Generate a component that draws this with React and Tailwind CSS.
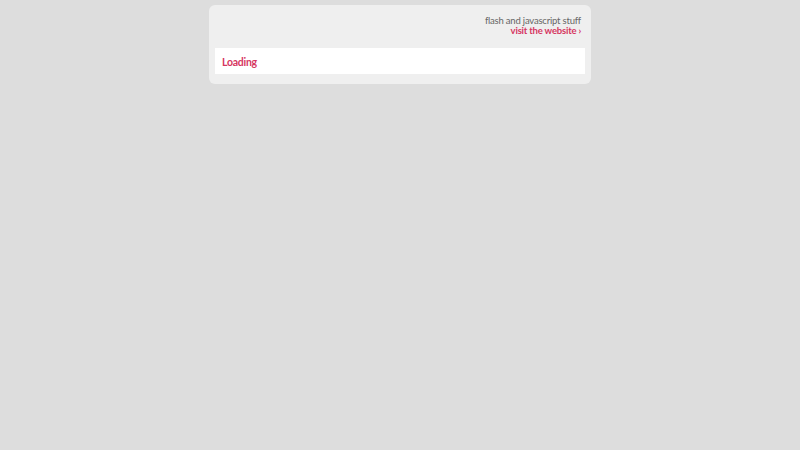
import React from 'react';

const App = () => {
  return (
    <div className="min-h-screen w-full bg-[#dddddd] pt-[5px]" style={{ fontFamily: 'Lato, "Open Sans", sans-serif' }}>
      <div className="mx-auto w-[382px] rounded-[6px] bg-[#efefef] px-[6px] pt-[11px] pb-[10px]">
        {/* header */}
        <div className="pr-[4px] text-right text-[9.5px] leading-[10px] tracking-[-0.2px]">
          <div className="text-[#666666]">flash and javascript stuff</div>
          <div className="font-bold text-[#d6365f]">visit the website ›</div>
        </div>

        {/* content */}
        <div className="mt-[12px] flex h-[26px] items-center bg-white pl-[7px] pt-[3px]">
          <span className="text-[10.5px] font-bold tracking-[-0.25px] text-[#d6365f]">Loading</span>
        </div>
      </div>
    </div>
  );
};

export default App;
